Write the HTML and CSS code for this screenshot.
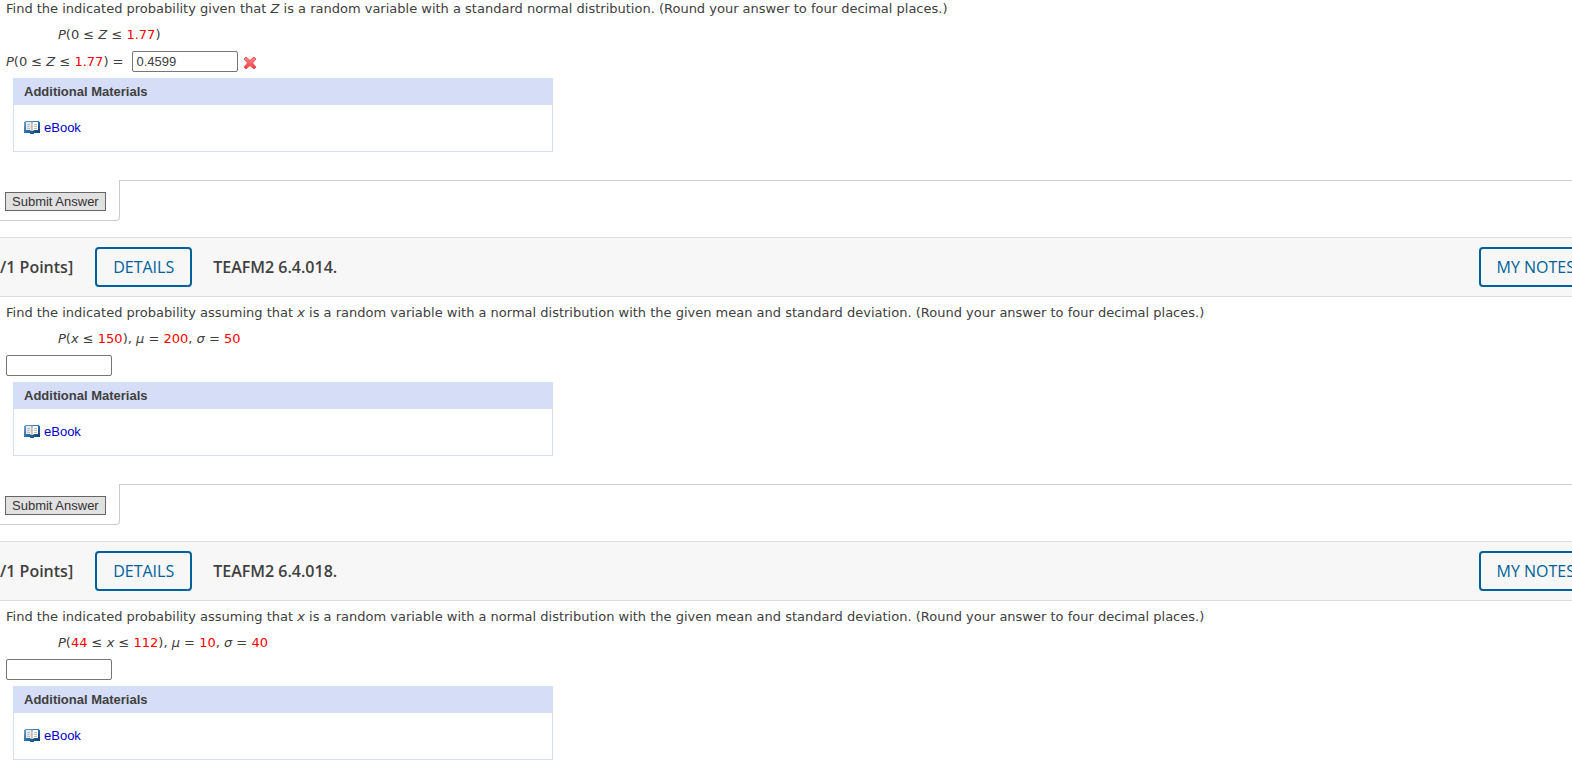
FILE: index.html
```
<!DOCTYPE html>
<html lang="en">

<head>
    <meta charset="UTF-8">
    <title>Assignment</title>
    <link rel="stylesheet" href="styles.css">
</head>

<body>
    <svg class="sprite" aria-hidden="true">
        <defs>
            <linearGradient id="cover" x1="0" y1="0" x2="1" y2="1">
                <stop offset="0" stop-color="#6fa8d2"/>
                <stop offset="0.5" stop-color="#2b6ea6"/>
                <stop offset="1" stop-color="#0d3c66"/>
            </linearGradient>
            <linearGradient id="cross" x1="0" y1="0" x2="0" y2="1">
                <stop offset="0" stop-color="#ff8a8a"/>
                <stop offset="1" stop-color="#f03a3a"/>
            </linearGradient>
        </defs>
        <symbol id="book" viewBox="0 0 16 14">
            <path d="M0 1h1v-1h14v1h1v11h-6v1h-4v-1h-6z" fill="url(#cover)"/>
            <path d="M2 1h5l1 1v8h-1l-1-1h-4z" fill="#e8e8e8"/>
            <path d="M14 1h-5l-1 1v8h1l1-1h4z" fill="#fafafa"/>
            <path d="M3 3.500h3M3 5.500h3M3 7.500h3M10 3.500h3M10 5.500h3M10 7.500h3" stroke="#c2c2c2"/>
            <path d="M8 2v8" stroke="#999"/>
        </symbol>
        <symbol id="wrong" viewBox="0 0 14 14">
            <path d="M3 1L7 4.500 11 1 13 3 9.500 7 13 11 11 13 7 9.500 3 13 1 11 4.500 7 1 3z" fill="url(#cross)" stroke="#ee555a" stroke-linejoin="round"/>
        </symbol>
    </svg>

    <div class="question first">
        <div class="content">
            <p>Find the indicated probability given that <i>Z</i> is a random variable with a standard normal distribution. (Round your answer to four decimal places.)</p>
            <p class="formula"><i>P</i>(0 ≤ <i>Z</i> ≤ <span class="red">1.77</span>)</p>
            <div class="answer">
                <label for="answer1"><i>P</i>(0 ≤ <i>Z</i> ≤ <span class="red">1.77</span>) =</label>
                <input type="text" id="answer1" value="0.4599">
                <svg class="mark" role="img" aria-label="Incorrect"><use href="#wrong"/></svg>
            </div>
            <div class="materials">
                <h3>Additional Materials</h3>
                <a href="#"><svg class="book" aria-hidden="true"><use href="#book"/></svg>eBook</a>
            </div>
        </div>
        <div class="submit">
            <div class="tab"><button type="button">Submit Answer</button></div>
            <div class="line"></div>
        </div>
    </div>

    <div class="question">
        <div class="header">
            <span class="points">/1 Points]</span>
            <button type="button">DETAILS</button>
            <strong>TEAFM2 6.4.014.</strong>
            <button type="button" class="notes">MY NOTES</button>
        </div>
        <div class="content">
            <p>Find the indicated probability assuming that <i>x</i> is a random variable with a normal distribution with the given mean and standard deviation. (Round your answer to four decimal places.)</p>
            <p class="formula"><i>P</i>(<i>x</i> ≤ <span class="red">150</span>), <i>μ</i> = <span class="red">200</span>, <i>σ</i> = <span class="red">50</span></p>
            <div class="answer">
                <input type="text" id="answer2" aria-label="Answer">
            </div>
            <div class="materials">
                <h3>Additional Materials</h3>
                <a href="#"><svg class="book" aria-hidden="true"><use href="#book"/></svg>eBook</a>
            </div>
        </div>
        <div class="submit">
            <div class="tab"><button type="button">Submit Answer</button></div>
            <div class="line"></div>
        </div>
    </div>

    <div class="question">
        <div class="header">
            <span class="points">/1 Points]</span>
            <button type="button">DETAILS</button>
            <strong>TEAFM2 6.4.018.</strong>
            <button type="button" class="notes">MY NOTES</button>
        </div>
        <div class="content">
            <p>Find the indicated probability assuming that <i>x</i> is a random variable with a normal distribution with the given mean and standard deviation. (Round your answer to four decimal places.)</p>
            <p class="formula"><i>P</i>(<span class="red">44</span> ≤ <i>x</i> ≤ <span class="red">112</span>), <i>μ</i> = <span class="red">10</span>, <i>σ</i> = <span class="red">40</span></p>
            <div class="answer">
                <input type="text" id="answer3" aria-label="Answer">
            </div>
            <div class="materials">
                <h3>Additional Materials</h3>
                <a href="#"><svg class="book" aria-hidden="true"><use href="#book"/></svg>eBook</a>
            </div>
        </div>
    </div>
</body>

</html>
```
FILE: styles.css
```
* {
    margin: 0;
    padding: 0;
    box-sizing: border-box;
}

body {
    background-color: #fff;
    color: #404040;
    font: 13px/16px Verdana, "DejaVu Sans", sans-serif;
    overflow-x: hidden;
}

.sprite {
    display: block;
    width: 0;
    height: 0;
}

.red {
    color: #f00;
}

/* question header */
.header {
    display: flex;
    align-items: center;
    height: 60px;
    border-top: 1px solid #ddd;
    border-bottom: 1px solid #ddd;
    background-color: #f7f7f7;
    font: 600 16px/24px "Open Sans", sans-serif;
    overflow: hidden;
}

.header .points {
    margin-right: 22px;
}

.header strong {
    margin-left: 21px;
    font-weight: 600;
}

.header button {
    height: 40px;
    padding: 0 16px;
    border: 2px solid #006298;
    border-radius: 4px;
    background-color: transparent;
    color: #006298;
    font: 16px/24px "Open Sans", sans-serif;
    white-space: nowrap;
}

.header .notes {
    margin-left: auto;
    margin-right: -21px;
}

/* question body */
.content {
    padding: 8px 6px 28px;
}

.first .content {
    padding-top: 1px;
}

.formula {
    margin: 10px 0 8px 52px;
}

.answer {
    display: flex;
    align-items: center;
    gap: 5px;
}

.answer label {
    margin-right: 4px;
}

.answer input {
    width: 106px;
    height: 21px;
    padding: 0 3px;
    border: 1px solid #767676;
    border-radius: 2px;
    background-color: #fff;
    color: #404040;
    font: 13px/16px Arial, "Liberation Sans", sans-serif;
}

.mark {
    width: 14px;
    height: 14px;
    margin-top: 2px;
}

.materials {
    max-width: 540px;
    margin: 6px 0 0 7px;
    border: 1px solid #d6ddf7;
    font: 13px/16px Arial, "Liberation Sans", sans-serif;
}

.materials h3 {
    padding: 5px 10px;
    background-color: #d6ddf7;
    font-size: 13px;
}

.materials a {
    display: flex;
    align-items: center;
    gap: 4px;
    padding: 15px 10px;
    color: #00c;
    text-decoration: none;
}

.book {
    width: 16px;
    height: 14px;
}

/* submit tab */
.submit {
    display: flex;
    padding-bottom: 16px;
}

.tab {
    padding: 12px 13px 9px 5px;
    border-right: 1px solid #ccc;
    border-bottom: 1px solid #ccc;
    border-bottom-right-radius: 4px;
}

.tab button {
    display: block;
    height: 19px;
    padding: 0 6px;
    border: 1px solid #666;
    background-color: #e1e1e1;
    color: #333;
    font: 13px/16px Arial, "Liberation Sans", sans-serif;
}

.line {
    flex: 1;
    border-top: 1px solid #ccc;
}
```
